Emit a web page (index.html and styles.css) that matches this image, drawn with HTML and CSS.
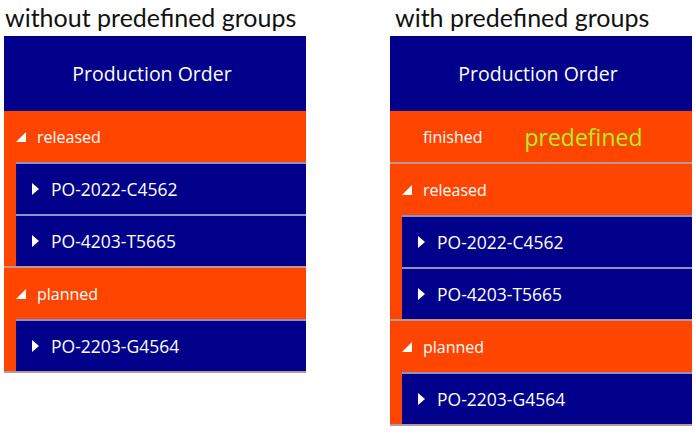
FILE: index.html
```html
<!DOCTYPE html>
<html>

<head>
  <meta charset="utf-8" />
  <title>grouping tree</title>
  <link rel="stylesheet" href="styles.css">
</head>

<body>
  <div class="page">
    <div class="column">
      <div class="caption">without predefined groups</div>
      <div class="tree">
        <div class="tree-head">Production Order</div>
        <div class="group">
          <div class="group-head"><span class="arrow-open"></span>released</div>
          <div class="items">
            <div class="item"><span class="arrow"></span>PO-2022-C4562</div>
            <div class="item"><span class="arrow"></span>PO-4203-T5665</div>
          </div>
        </div>
        <div class="group">
          <div class="group-head"><span class="arrow-open"></span>planned</div>
          <div class="items">
            <div class="item"><span class="arrow"></span>PO-2203-G4564</div>
          </div>
        </div>
      </div>
    </div>

    <div class="column">
      <div class="caption caption-right">with predefined groups</div>
      <div class="tree">
        <div class="tree-head">Production Order</div>
        <div class="group">
          <div class="group-head group-head-plain">finished<span class="tag">predefined</span></div>
        </div>
        <div class="group">
          <div class="group-head"><span class="arrow-open"></span>released</div>
          <div class="items">
            <div class="item"><span class="arrow"></span>PO-2022-C4562</div>
            <div class="item"><span class="arrow"></span>PO-4203-T5665</div>
          </div>
        </div>
        <div class="group">
          <div class="group-head"><span class="arrow-open"></span>planned</div>
          <div class="items">
            <div class="item"><span class="arrow"></span>PO-2203-G4564</div>
          </div>
        </div>
      </div>
    </div>
  </div>
</body>

</html>
```

FILE: styles.css
```css
body {
  margin: 0;
  background: #fff;
  font-family: "Open Sans", "Noto Sans", sans-serif;
}

.page {
  display: flex;
  gap: 84px;
  padding-left: 4px;
}

.column {
  width: 302px;
}

.caption {
  height: 36px;
  padding-left: 1px;
  font-family: Lato, "Open Sans", sans-serif;
  font-size: 25px;
  line-height: 34px;
  color: #111;
  white-space: nowrap;
}

.caption-right {
  padding-left: 5px;
}

.tree {
  color: #fff;
}

.tree-head {
  height: 75px;
  display: flex;
  align-items: center;
  justify-content: center;
  padding-right: 6px;
  background: #00008b;
  font-size: 19.5px;
}

/* each group closes with a grey rule across the full width */
.group {
  background: #ff4500;
  border-bottom: 2px solid rgba(170, 170, 190, 0.8);
}

.group-head {
  height: 51px;
  display: flex;
  align-items: center;
  padding-left: 12px;
  font-size: 16px;
}

.group-head-plain {
  padding-left: 33px;
}

.arrow-open {
  width: 0;
  height: 0;
  margin-right: 11px;
  border-style: solid;
  border-width: 0 0 10px 10px;
  border-color: transparent transparent #fff transparent;
}

.tag {
  margin-left: 42px;
  font-size: 23px;
  color: #adf01e;
}

.items {
  padding-left: 12px;
}

.item {
  height: 50px;
  display: flex;
  align-items: center;
  padding-left: 16px;
  background: #00008b;
  border-top: 2px solid rgba(170, 170, 200, 0.85);
  font-size: 17.5px;
}

.arrow {
  width: 0;
  height: 0;
  margin-right: 12px;
  border-style: solid;
  border-width: 6.5px 0 6.5px 7px;
  border-color: transparent transparent transparent #fff;
}
```
